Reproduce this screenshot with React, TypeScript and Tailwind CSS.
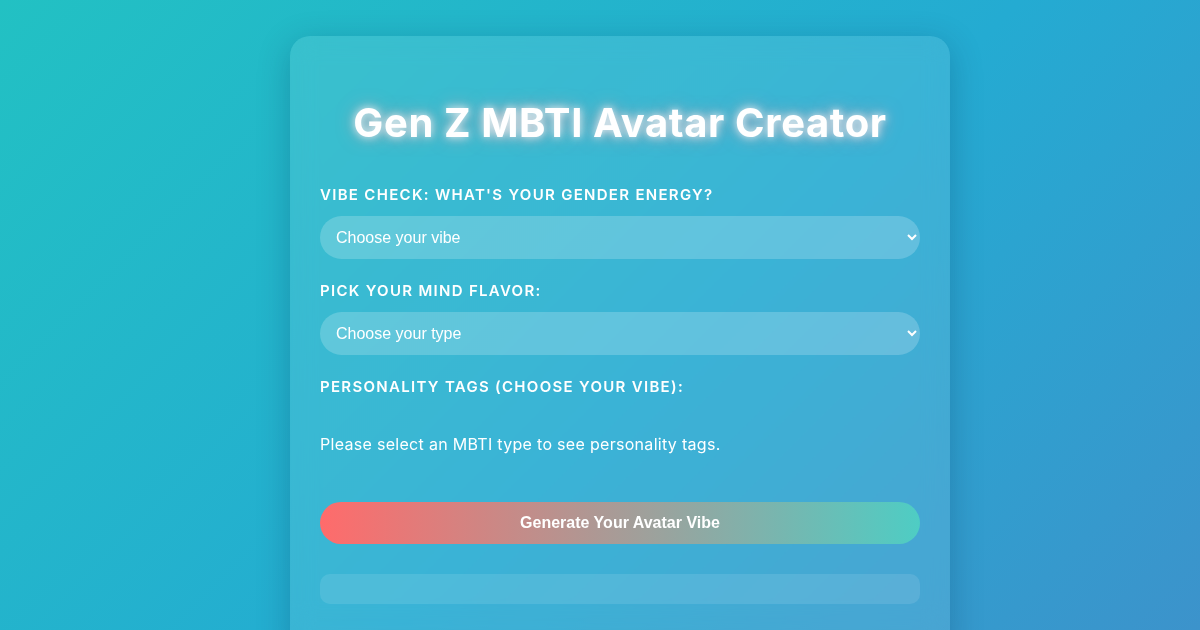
import React, { useState } from 'react';

const labelCls =
  'block mb-[10px] text-[15px] leading-[23px] font-semibold uppercase tracking-[1.3px] text-white font-["Inter",sans-serif]';

const selectCls =
  'w-full h-[43px] rounded-full bg-white/20 pl-[12px] pr-[6px] text-[16px] text-white outline-none border-0 font-["Liberation_Sans",Arial,sans-serif] cursor-pointer';

const App = () => {
  const [gender, setGender] = useState('');
  const [mbti, setMbti] = useState('');

  return (
    <div className="min-h-[630px] w-full overflow-hidden bg-[linear-gradient(135deg,#22c1c3_0%,#24abd2_55%,#3d92cb_100%)] flex justify-center pl-[40px]">
      <div className="mt-[36px] w-[660px] h-[620px] rounded-[20px] bg-white/10 backdrop-blur-md shadow-[0_8px_32px_rgba(0,40,80,0.25)] px-[30px] pt-[30px]">
        <h1 className="mt-[27px] mb-[30px] text-center text-[40px] leading-[60px] font-bold text-white tracking-[0.6px] font-['Inter',sans-serif] [text-shadow:0_0_8px_rgba(255,255,255,0.9),0_0_18px_rgba(255,140,150,0.7)]">
          Gen Z MBTI Avatar Creator
        </h1>

        <div>
          <label className={labelCls}>Vibe Check: What's Your Gender Energy?</label>
          <select className={selectCls} value={gender} onChange={(e) => setGender(e.target.value)}>
            <option value="" className="text-black">Choose your vibe</option>
            <option value="masc" className="text-black">Masc energy</option>
            <option value="femme" className="text-black">Femme energy</option>
            <option value="nb" className="text-black">Non-binary energy</option>
          </select>
        </div>

        <div className="mt-[20px]">
          <label className={labelCls}>Pick Your Mind Flavor:</label>
          <select className={selectCls} value={mbti} onChange={(e) => setMbti(e.target.value)}>
            <option value="" className="text-black">Choose your type</option>
            {['INTJ', 'INTP', 'ENTJ', 'ENTP', 'INFJ', 'INFP', 'ENFJ', 'ENFP'].map((t) => (
              <option key={t} value={t} className="text-black">
                {t}
              </option>
            ))}
          </select>
        </div>

        <div className="mt-[20px]">
          <label className={labelCls}>Personality Tags (Choose Your Vibe):</label>
          <p className="mt-[34px] text-[16px] leading-[24px] tracking-[0.3px] text-white font-['Inter',sans-serif]">
            Please select an MBTI type to see personality tags.
          </p>
        </div>

        <button className="mt-[46px] w-full h-[42px] rounded-full bg-[linear-gradient(90deg,#ff6b6b,#4ecdc4)] text-white text-[16px] font-bold font-['Liberation_Sans',Arial,sans-serif]">
          Generate Your Avatar Vibe
        </button>

        <div className="mt-[30px] h-[30px] rounded-[10px] bg-white/10" />
      </div>
    </div>
  );
};

export default App;
